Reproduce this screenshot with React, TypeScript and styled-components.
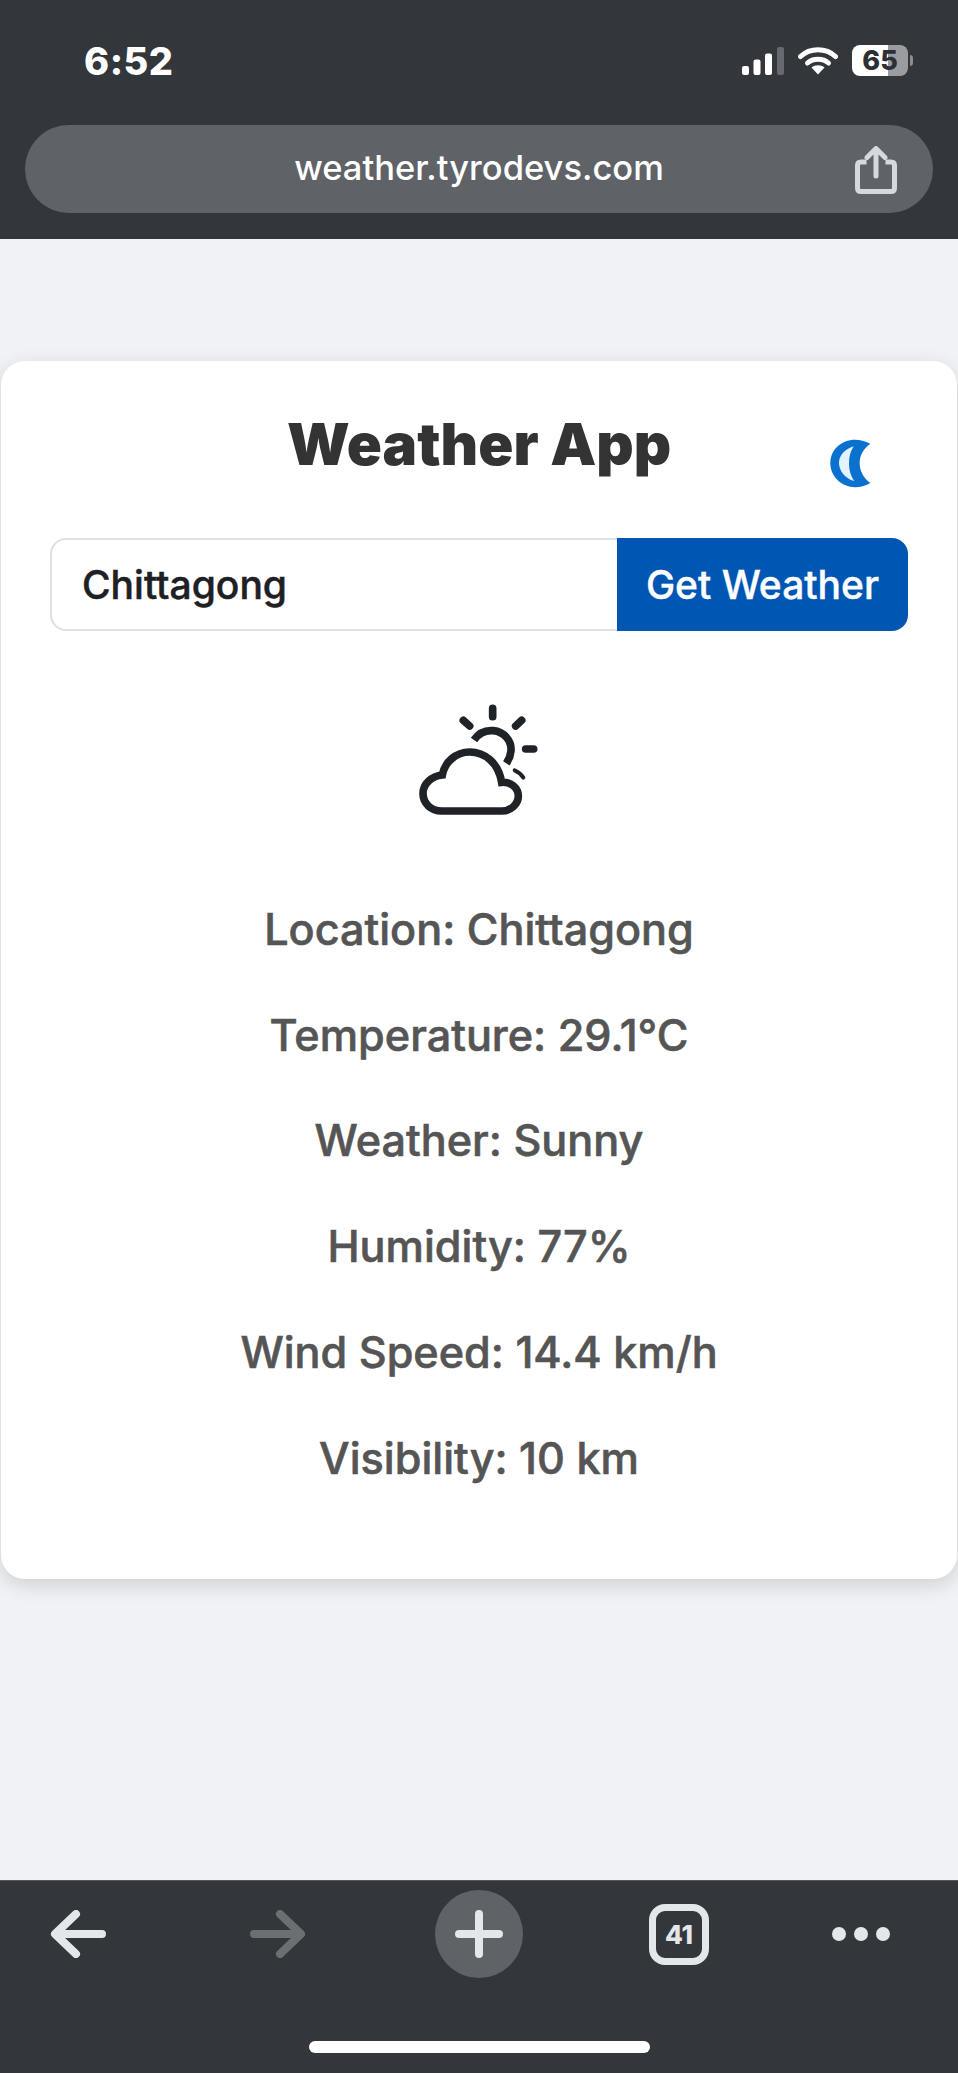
import React from "react";
import styled, { createGlobalStyle } from "styled-components";

const GlobalStyle = createGlobalStyle`
    * { box-sizing: border-box; }
    html, body { margin: 0; padding: 0; background: #f0f2f5; }
    body { font-family: "Inter", "Liberation Sans", sans-serif; }
`;

const readings = [
    "Location: Chittagong",
    "Temperature: 29.1°C",
    "Weather: Sunny",
    "Humidity: 77%",
    "Wind Speed: 14.4 km/h",
    "Visibility: 10 km",
];

const App = () => (
    <Screen>
        <GlobalStyle />
        <BrowserHeader>
            <StatusBar>
                <Clock>6:52</Clock>
                <StatusIcons>
                    <SignalIcon />
                    <WifiIcon />
                    <Battery>
                        <BatteryBody>65</BatteryBody>
                        <BatteryCap />
                    </Battery>
                </StatusIcons>
            </StatusBar>
            <AddressBar>
                <Url>weather.tyrodevs.com</Url>
                <ShareIcon />
            </AddressBar>
        </BrowserHeader>

        <Main>
            <Card>
                <Title>Weather App</Title>
                <ThemeToggle aria-label="Toggle theme">
                    <MoonIcon />
                </ThemeToggle>
                <SearchForm>
                    <CityInput value="Chittagong" readOnly />
                    <SearchButton type="button">Get Weather</SearchButton>
                </SearchForm>
                <WeatherIcon />
                <Readings>
                    {readings.map((line) => (
                        <Reading key={line}>{line}</Reading>
                    ))}
                </Readings>
            </Card>
        </Main>

        <Toolbar>
            <ToolbarButtons>
                <ToolSlot><ArrowIcon /></ToolSlot>
                <ToolSlot><ArrowIcon $forward /></ToolSlot>
                <ToolSlot>
                    <NewTabButton><PlusIcon /></NewTabButton>
                </ToolSlot>
                <ToolSlot><TabCount>41</TabCount></ToolSlot>
                <ToolSlot>
                    <Dots><Dot /><Dot /><Dot /></Dots>
                </ToolSlot>
            </ToolbarButtons>
            <HomeIndicator />
        </Toolbar>
    </Screen>
);

export default App;

const SignalIcon = () => (
    <svg width="42" height="28" viewBox="0 0 42 28">
        <rect x="0" y="19" width="7" height="9" rx="2" fill="#fff" />
        <rect x="11.5" y="12.5" width="7" height="15.5" rx="2" fill="#fff" />
        <rect x="23" y="6.5" width="7" height="21.5" rx="2" fill="#fff" />
        <rect x="35" y="0" width="7" height="28" rx="2" fill="#66696d" />
    </svg>
);

const WifiIcon = () => (
    <svg width="40" height="29" viewBox="0 0 40 29">
        <path d="M2.5 10.5 C12 1.5 28 1.5 37.5 10.5" fill="none" stroke="#fff" strokeWidth="5" strokeLinecap="round" />
        <path d="M9.5 17 C15 12 25 12 30.5 17" fill="none" stroke="#fff" strokeWidth="5" strokeLinecap="round" />
        <path d="M13.5 21.5 C17 18.6 23 18.6 26.5 21.5 L20 28.5 Z" fill="#fff" />
    </svg>
);

const ShareIcon = () => (
    <svg width="42" height="48" viewBox="0 0 42 48">
        <path
            d="M11.5 16 H6 Q2.5 16 2.5 19.5 V42 Q2.5 45.5 6 45.5 H36 Q39.5 45.5 39.5 42 V19.5 Q39.5 16 36 16 H30.5"
            fill="none" stroke="#d5d9de" strokeWidth="5"
        />
        <path d="M21 30 V3 M12 11.5 L21 2.5 L30 11.5" fill="none" stroke="#d5d9de" strokeWidth="5" strokeLinecap="round" strokeLinejoin="round" />
    </svg>
);

const MoonIcon = () => (
    <svg width="44" height="54" viewBox="80 60 132 162">
        <path
            d="M210 74 C150 42 90 78 90 132 C90 186 150 226 210 192 C188 176 178 154 178 132 C178 110 188 90 210 74 Z"
            fill="#0b71cf"
        />
        <path
            d="M160 82 C134 90 116 110 116 132 C116 154 134 180 162 186 C150 170 146 150 146 132 C146 114 150 98 160 82 Z"
            fill="#e2f3ff"
        />
    </svg>
);

const WeatherIcon = () => (
    <WeatherSvg viewBox="0 0 480 420" fill="none" stroke="#1f2226" strokeLinecap="round">
        <path strokeWidth="23" d="M281 55 V80 M193 91 L212 108 M368 91 L350 108 M380 177 H404" />
        <path strokeWidth="12" d="M347 241 C357 245 366 252 373 263" />
        <path strokeWidth="23" strokeLinecap="butt" d="M225 150 C240 128 262 120 283 122 C315 125 338 152 336 182 C335 196 330 208 322 220" />
        <path
            strokeWidth="23"
            d="M128 363 H308 C336 363 358 342 358 318 C358 294 336 275 308 277 C298 217 256 186 212 186 C170 186 137 217 130 255 C98 258 72 282 72 310 C72 340 96 363 128 363 Z"
        />
    </WeatherSvg>
);

const ArrowIcon = ({ $forward }: { $forward?: boolean }) => (
    <svg width="56" height="48" viewBox="0 0 56 48" style={{ transform: $forward ? "scaleX(-1)" : undefined }}>
        <path
            d="M52 24 H6 M26 4 L5 24 L26 44"
            fill="none" stroke={$forward ? "#6c6f72" : "#e4e7ea"} strokeWidth="8" strokeLinecap="round" strokeLinejoin="round"
        />
    </svg>
);

const PlusIcon = () => (
    <svg width="48" height="48" viewBox="0 0 48 48">
        <path d="M24 4 V44 M4 24 H44" stroke="#e4e7ea" strokeWidth="8" strokeLinecap="round" />
    </svg>
);

const Screen = styled.div`
    width: 958px;
    height: 2073px;
    display: flex;
    flex-direction: column;
    background: #f0f2f5;
    overflow: hidden;
`;

const BrowserHeader = styled.header`
    height: 239px;
    background: #33363a;
`;

const StatusBar = styled.div`
    height: 125px;
    padding: 0 45px 4px 84px;
    display: flex;
    align-items: center;
    justify-content: space-between;
`;

const Clock = styled.span`
    color: #fff;
    font-size: 38px;
    font-weight: 800;
    letter-spacing: 0.5px;
`;

const StatusIcons = styled.div`
    display: flex;
    align-items: center;
    gap: 14px;
`;

const Battery = styled.div`
    display: flex;
    align-items: center;
    gap: 2px;
`;

const BatteryBody = styled.div`
    width: 56px;
    height: 31px;
    border-radius: 8px;
    background: linear-gradient(to right, #fff 0 65%, #9a9c9f 65% 100%);
    color: #2c2f33;
    font-size: 27px;
    font-weight: 800;
    line-height: 31px;
    text-align: center;
`;

const BatteryCap = styled.div`
    width: 3px;
    height: 11px;
    border-radius: 0 3px 3px 0;
    background: #8b8d90;
`;

const AddressBar = styled.div`
    height: 88px;
    margin: 0 25px;
    padding: 0 36px;
    border-radius: 44px;
    background: #5f6367;
    display: grid;
    grid-template-columns: 1fr auto 1fr;
    grid-template-areas: ". url share";
    align-items: center;
    svg { grid-area: share; justify-self: end; margin-top: 2px; }
`;

const Url = styled.span`
    grid-area: url;
    margin-bottom: 3px;
    color: #fff;
    font-size: 34.5px;
    font-weight: 500;
`;

const Main = styled.main`
    flex: 1;
    padding: 122px 1px 0;
`;

const Card = styled.section`
    position: relative;
    height: 1218px;
    padding: 49px 49px 0;
    border-radius: 24px;
    background: #fff;
    box-shadow: 0 6px 20px rgba(0, 0, 0, 0.14);
`;

const Title = styled.h1`
    margin: 0;
    color: #333;
    font-size: 58px;
    line-height: 68px;
    font-weight: 900;
    text-align: center;
`;

const ThemeToggle = styled.button`
    position: absolute;
    top: 78px;
    right: 86px;
    padding: 0;
    border: 0;
    background: none;
    display: flex;
    filter: blur(0.5px);
`;

const SearchForm = styled.form`
    display: flex;
    height: 93px;
    margin: 60px 0 0;
`;

const CityInput = styled.input`
    flex: 1;
    min-width: 0;
    padding: 0 30px;
    border: 2px solid #dfe0e3;
    border-right: 0;
    border-radius: 16px 0 0 16px;
    color: #1f2024;
    font-family: inherit;
    font-size: 39px;
    font-weight: 500;
    -webkit-text-stroke: 0.5px #1f2024;
    outline: none;
`;

const SearchButton = styled.button`
    width: 291px;
    border: 0;
    border-radius: 0 16px 16px 0;
    background: #0056b3;
    color: #fff;
    font-family: inherit;
    font-size: 39px;
    font-weight: 500;
    -webkit-text-stroke: 0.4px #fff;
`;

const WeatherSvg = styled.svg`
    display: block;
    width: 160px;
    height: 140px;
    margin: 59px auto 0;
`;

const Readings = styled.div`
    margin-top: 75px;
    display: flex;
    flex-direction: column;
    gap: 56px;
`;

const Reading = styled.p`
    margin: 0;
    color: #555;
    font-size: 43.2px;
    line-height: 49.7px;
    font-weight: 500;
    -webkit-text-stroke: 0.6px #555;
    text-align: center;
`;

const Toolbar = styled.footer`
    height: 193px;
    background: #33363a;
    border-top: 1px solid #55585b;
    display: flex;
    flex-direction: column;
`;

const ToolbarButtons = styled.nav`
    height: 160px;
    padding-top: 9px;
    display: grid;
    grid-template-columns: 156px 244px 158px 242px 122px;
    grid-template-rows: 88px;
`;

const ToolSlot = styled.div`
    display: flex;
    align-items: center;
    justify-content: center;
`;

const NewTabButton = styled.div`
    width: 88px;
    height: 88px;
    border-radius: 50%;
    background: #5f6367;
    display: flex;
    align-items: center;
    justify-content: center;
`;

const TabCount = styled.div`
    width: 60px;
    height: 61px;
    border: 7px solid #e4e7ea;
    border-radius: 16px;
    color: #e4e7ea;
    font-size: 26px;
    font-weight: 800;
    display: flex;
    align-items: center;
    justify-content: center;
`;

const Dots = styled.div`
    display: flex;
    gap: 8px;
`;

const Dot = styled.span`
    width: 14px;
    height: 14px;
    border-radius: 50%;
    background: #e4e7ea;
`;

const HomeIndicator = styled.div`
    width: 341px;
    height: 12px;
    margin: 0 auto;
    border-radius: 6px;
    background: #fff;
`;
